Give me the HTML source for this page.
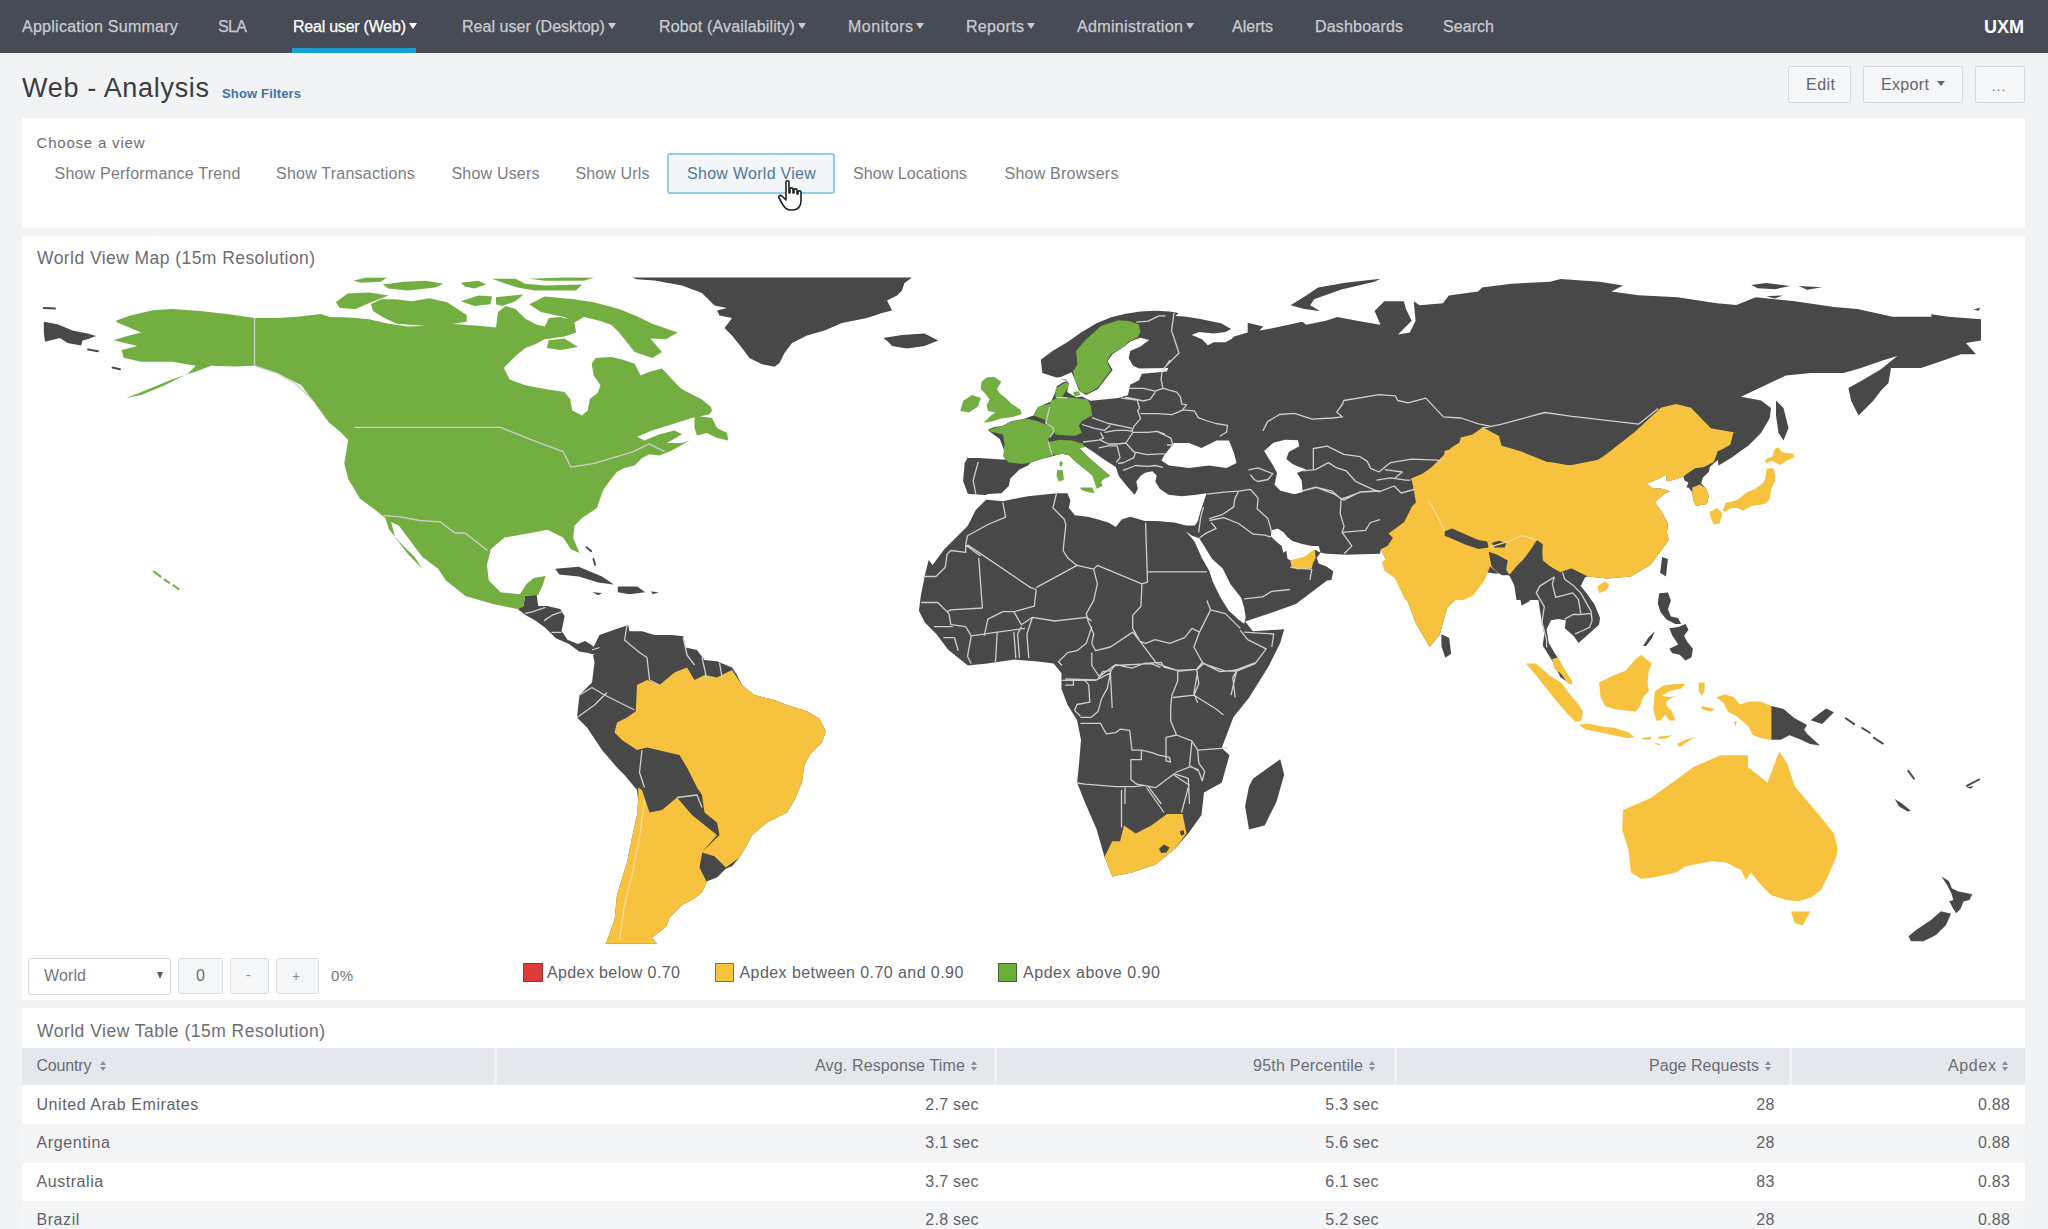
<!DOCTYPE html><html><head><meta charset="utf-8"><style>
html,body{margin:0;padding:0;}
body{width:2048px;height:1229px;overflow:hidden;position:relative;background:#f2f3f5;font-family:"Liberation Sans", sans-serif;}
.t{position:absolute;line-height:1;white-space:nowrap;}
</style></head><body>
<div style="position:absolute;left:0px;top:0px;width:2048px;height:53px;background:#474b56;"></div>
<div style="position:absolute;left:292px;top:48px;width:124px;height:5px;background:#1aa0d0;"></div>
<div class="t" style="left:22.0px;top:19.0px;font-size:16px;color:#c9ccd2;font-weight:400;letter-spacing:0.26px;-webkit-text-stroke:0.25px #c9ccd2;">Application Summary</div>
<div class="t" style="left:218.0px;top:19.0px;font-size:16px;color:#c9ccd2;font-weight:400;letter-spacing:-0.62px;-webkit-text-stroke:0.25px #c9ccd2;">SLA</div>
<div class="t" style="left:293.0px;top:19.0px;font-size:16px;color:#ffffff;font-weight:400;letter-spacing:-0.23px;-webkit-text-stroke:0.25px #ffffff;">Real user (Web)</div>
<div style="position:absolute;left:409px;top:23px;width:0;height:0;border-left:4.0px solid transparent;border-right:4.0px solid transparent;border-top:6px solid #ffffff;"></div>
<div class="t" style="left:462.0px;top:19.0px;font-size:16px;color:#c9ccd2;font-weight:400;letter-spacing:0.03px;-webkit-text-stroke:0.25px #c9ccd2;">Real user (Desktop)</div>
<div style="position:absolute;left:608px;top:23px;width:0;height:0;border-left:4.0px solid transparent;border-right:4.0px solid transparent;border-top:6px solid #c9ccd2;"></div>
<div class="t" style="left:659.0px;top:19.0px;font-size:16px;color:#c9ccd2;font-weight:400;letter-spacing:0.15px;-webkit-text-stroke:0.25px #c9ccd2;">Robot (Availability)</div>
<div style="position:absolute;left:798px;top:23px;width:0;height:0;border-left:4.0px solid transparent;border-right:4.0px solid transparent;border-top:6px solid #c9ccd2;"></div>
<div class="t" style="left:848.0px;top:19.0px;font-size:16px;color:#c9ccd2;font-weight:400;letter-spacing:0.52px;-webkit-text-stroke:0.25px #c9ccd2;">Monitors</div>
<div style="position:absolute;left:916px;top:23px;width:0;height:0;border-left:4.0px solid transparent;border-right:4.0px solid transparent;border-top:6px solid #c9ccd2;"></div>
<div class="t" style="left:966.0px;top:19.0px;font-size:16px;color:#c9ccd2;font-weight:400;letter-spacing:0.32px;-webkit-text-stroke:0.25px #c9ccd2;">Reports</div>
<div style="position:absolute;left:1027px;top:23px;width:0;height:0;border-left:4.0px solid transparent;border-right:4.0px solid transparent;border-top:6px solid #c9ccd2;"></div>
<div class="t" style="left:1077.0px;top:19.0px;font-size:16px;color:#c9ccd2;font-weight:400;letter-spacing:0.35px;-webkit-text-stroke:0.25px #c9ccd2;">Administration</div>
<div style="position:absolute;left:1186px;top:23px;width:0;height:0;border-left:4.0px solid transparent;border-right:4.0px solid transparent;border-top:6px solid #c9ccd2;"></div>
<div class="t" style="left:1232.0px;top:19.0px;font-size:16px;color:#c9ccd2;font-weight:400;letter-spacing:0.02px;-webkit-text-stroke:0.25px #c9ccd2;">Alerts</div>
<div class="t" style="left:1315.0px;top:19.0px;font-size:16px;color:#c9ccd2;font-weight:400;letter-spacing:0.19px;-webkit-text-stroke:0.25px #c9ccd2;">Dashboards</div>
<div class="t" style="left:1443.0px;top:19.0px;font-size:16px;color:#c9ccd2;font-weight:400;letter-spacing:0.06px;-webkit-text-stroke:0.25px #c9ccd2;">Search</div>
<div class="t" style="left:1984.0px;top:18.3px;font-size:18px;color:#ffffff;font-weight:700;letter-spacing:0.00px;">UXM</div>
<div class="t" style="left:22.0px;top:75.1px;font-size:27px;color:#3a3d42;font-weight:400;letter-spacing:0.69px;">Web - Analysis</div>
<div class="t" style="left:222.0px;top:87.0px;font-size:13px;color:#3d72a8;font-weight:700;letter-spacing:0.16px;">Show Filters</div>
<div style="position:absolute;left:1788px;top:66px;width:63px;height:37px;box-sizing:border-box;border:1px solid #d5d8dc;border-radius:2px;background:#f5f6f7;"></div>
<div style="position:absolute;left:1863px;top:66px;width:100px;height:37px;box-sizing:border-box;border:1px solid #d5d8dc;border-radius:2px;background:#f5f6f7;"></div>
<div style="position:absolute;left:1975px;top:66px;width:50px;height:37px;box-sizing:border-box;border:1px solid #d5d8dc;border-radius:2px;background:#f5f6f7;"></div>
<div class="t" style="left:1806.0px;top:77.0px;font-size:16px;color:#62666c;font-weight:400;letter-spacing:0.47px;">Edit</div>
<div class="t" style="left:1881.0px;top:77.0px;font-size:16px;color:#62666c;font-weight:400;letter-spacing:0.35px;">Export</div>
<div style="position:absolute;left:1937px;top:81px;width:0;height:0;border-left:4.0px solid transparent;border-right:4.0px solid transparent;border-top:5px solid #62666c;"></div>
<div class="t" style="left:1992.0px;top:80.0px;font-size:13px;color:#62666c;font-weight:400;letter-spacing:1.09px;">...</div>
<div style="position:absolute;left:22px;top:118px;width:2003px;height:110px;background:#fff;"></div>
<div class="t" style="left:36.5px;top:135.3px;font-size:15px;color:#6b6e73;font-weight:400;letter-spacing:0.80px;">Choose a view</div>
<div style="position:absolute;left:667px;top:153px;width:168px;height:41px;box-sizing:border-box;border:2px solid #93cbe8;border-radius:3px;background:#f3f6f9;"></div>
<div class="t" style="left:54.5px;top:165.5px;font-size:16px;color:#7a7d82;font-weight:400;letter-spacing:0.21px;">Show Performance Trend</div>
<div class="t" style="left:276.0px;top:165.5px;font-size:16px;color:#7a7d82;font-weight:400;letter-spacing:0.23px;">Show Transactions</div>
<div class="t" style="left:451.5px;top:165.5px;font-size:16px;color:#7a7d82;font-weight:400;letter-spacing:0.19px;">Show Users</div>
<div class="t" style="left:575.5px;top:165.5px;font-size:16px;color:#7a7d82;font-weight:400;letter-spacing:0.13px;">Show Urls</div>
<div class="t" style="left:687.0px;top:165.5px;font-size:16px;color:#52789a;font-weight:400;letter-spacing:0.29px;">Show World View</div>
<div class="t" style="left:853.0px;top:165.5px;font-size:16px;color:#7a7d82;font-weight:400;letter-spacing:0.07px;">Show Locations</div>
<div class="t" style="left:1004.5px;top:165.5px;font-size:16px;color:#7a7d82;font-weight:400;letter-spacing:0.23px;">Show Browsers</div>
<svg style="position:absolute;left:778px;top:180px" width="26" height="32" viewBox="0 0 26 32"><path d="M8,2 C8,0.5 11,0.5 11,2 L11,13 L12,13 L12,9 C12,7.5 15,7.5 15,9 L15,13 L16,13 L16,10 C16,8.5 19,8.5 19,10 L19,14 L20,14 L20,12 C20,10.5 23,10.5 23,12 L23,21 C23,26 20,30 15,30 L12,30 C9,30 7,28 5,25 L1,18 C0,16 2,14.5 4,16 L8,20 Z" fill="#fff" stroke="#222" stroke-width="1.6" stroke-linejoin="round"/></svg>
<div style="position:absolute;left:22px;top:236px;width:2003px;height:764px;background:#fff;"></div>
<div class="t" style="left:37.0px;top:250.2px;font-size:17.5px;color:#6b6e73;font-weight:400;letter-spacing:0.44px;">World View Map (15m Resolution)</div>
<svg style="position:absolute;left:0;top:0" width="2048" height="1229" viewBox="0 0 2048 1229"><defs><clipPath id="mc"><rect x="24" y="277" width="2000" height="667"/></clipPath></defs><g clip-path="url(#mc)">
<path fill="#484848" d="M987.3,495.3L967.8,493.8L963.1,480.9L964.6,463.3L967.8,457.5L964.6,457.9L979.3,457.9L1001.3,459.4L1005.7,459.4L1004.2,450.6L999.8,438.9L989.6,431.6L988.1,429.4L993.9,427.2L1002.7,425.7L1011.5,421.3L1023.2,419.1L1029.1,416.9L1033.5,415.5L1036.4,409.6L1043.8,404.5L1051.1,401.6L1055.5,392.0L1056.9,386.2L1062.8,382.5L1067.2,381.0L1042.3,373.0L1040.8,359.8L1052.5,351.0L1067.2,342.2L1081.8,332.0L1096.5,323.2L1111.1,317.3L1125.8,313.7L1140.4,311.5L1155.1,310.7L1169.7,311.5L1178.5,312.9L1175.6,315.9L1184.4,316.6L1199.0,318.8L1221.0,323.2L1231.2,329.0L1225.4,332.0L1213.7,333.4L1199.0,332.0L1191.7,334.9L1202.0,339.3L1207.8,345.2L1213.7,342.2L1225.4,342.2L1231.2,339.3L1234.0,336.4L1247.7,332.5L1247.7,322.7L1263.3,326.6L1259.4,330.5L1271.1,328.6L1302.3,321.8L1306.2,324.7L1325.8,320.8L1337.5,316.9L1357.0,320.8L1380.5,324.7L1374.6,311.0L1384.4,301.2L1403.9,301.2L1405.9,309.1L1411.7,320.8L1398.0,334.5L1409.8,332.5L1415.6,320.8L1413.7,301.2L1419.5,305.2L1443.0,303.2L1448.8,295.4L1478.1,291.5L1482.0,287.6L1511.3,283.7L1550.0,281.7L1560.5,278.9L1599.6,281.7L1623.0,285.6L1611.3,291.4L1638.6,295.3L1677.7,297.3L1716.8,303.2L1736.3,305.1L1755.8,297.3L1794.9,301.2L1833.9,307.1L1857.4,309.0L1892.5,316.8L1931.6,316.8L1931.0,314.2L1948.5,316.8L1981.0,319.2L1981.0,340.5L1966.0,343.0L1976.0,354.2L1961.0,354.2L1936.0,363.0L1921.0,368.0L1891.0,368.0L1888.5,383.0L1881.0,390.5L1873.5,400.5L1858.5,415.5L1851.0,400.5L1848.5,388.0L1861.0,381.0L1881.0,369.2L1897.2,356.0L1881.0,361.0L1861.0,368.0L1843.5,373.0L1811.0,373.0L1786.0,375.5L1741.0,396.8L1761.0,400.5L1771.0,408.0L1769.8,418.0L1761.0,433.0L1748.5,445.5L1731.0,458.0L1718.5,465.5L1717.7,460.0L1709.8,466.9L1708.9,471.8L1703.0,477.6L1701.1,483.5L1705.9,488.4L1708.9,496.2L1706.9,504.0L1696.2,505.9L1693.2,500.1L1692.3,492.3L1688.4,487.4L1686.4,487.4L1688.4,482.5L1683.5,476.6L1674.7,479.6L1666.9,481.5L1665.9,474.7L1659.1,478.6L1649.3,482.5L1646.4,483.5L1652.2,488.4L1661.0,488.4L1669.8,491.3L1663.9,494.2L1657.1,500.1L1654.2,504.0L1659.1,507.9L1663.9,515.7L1667.9,523.5L1666.9,532.3L1668.8,540.0L1662.1,549.2L1650.3,564.9L1630.8,576.6L1607.4,578.5L1587.8,576.6L1585.3,576.9L1580.7,586.1L1586.4,592.9L1594.4,604.3L1600.1,617.9L1599.0,624.8L1588.7,633.9L1578.5,643.0L1573.9,636.2L1564.8,628.2L1565.9,620.2L1557.9,619.1L1551.1,620.2L1546.6,629.3L1548.8,643.0L1553.4,651.0L1559.1,660.0L1560.5,665.5L1568.3,681.1L1572.2,685.0L1560.5,677.2L1552.7,661.6L1542.7,645.6L1544.3,633.9L1542.0,622.5L1539.7,608.8L1537.4,592.9L1528.3,602.0L1521.5,605.4L1520.4,599.7L1514.7,586.1L1510.1,576.9L1507.8,573.5L1503.3,573.5L1494.2,573.5L1488.5,572.4L1486.3,572.7L1466.8,588.3L1447.2,607.8L1439.4,635.2L1429.6,646.9L1416.0,623.5L1404.2,592.2L1396.4,576.6L1388.6,564.9L1380.8,549.2L1380.0,553.8L1346.0,554.7L1326.5,553.8L1320.6,552.8L1316.7,557.7L1318.7,563.5L1326.5,566.4L1333.3,571.3L1331.4,580.0L1327.1,580.5L1311.5,592.2L1295.9,603.9L1268.5,613.7L1245.1,621.5L1252.9,631.3L1284.2,629.3L1280.2,643.0L1268.5,666.4L1249.0,697.7L1233.4,717.2L1221.7,748.1L1229.5,755.3L1221.7,782.7L1204.0,792.5L1201.5,815.0L1189.0,832.5L1174.8,849.1L1155.2,864.7L1131.8,872.5L1112.3,876.4L1104.5,856.9L1096.7,829.5L1084.9,802.2L1077.1,782.7L1079.1,763.1L1081.0,739.7L1077.1,720.2L1067.4,704.5L1061.5,688.9L1061.5,673.3L1053.7,663.5L1038.1,661.6L1014.6,659.6L987.3,663.5L967.8,665.5L948.2,649.8L936.5,634.2L924.8,622.5L918.9,610.8L920.9,595.2L924.8,575.6L928.7,560.0L932.6,564.9L944.3,549.2L967.8,525.8L975.6,510.2L987.3,498.5ZM1139.2,500.6L1150.9,502.0L1148.0,503.5L1140.0,502.0ZM1187.6,502.8L1196.3,500.6L1194.9,504.2L1189.0,505.0ZM632.0,277.5L912.0,277.5L904.5,283.0L902.0,290.5L897.0,295.5L887.0,300.5L892.0,310.5L882.0,313.0L867.0,318.0L842.0,323.0L824.5,330.5L807.0,335.5L792.0,343.0L784.5,353.0L779.5,363.0L774.5,366.8L762.0,364.2L749.5,358.0L742.0,348.0L732.0,335.5L724.5,328.0L732.0,318.0L719.5,315.5L717.0,310.5L727.0,308.0L714.5,305.5L702.0,293.0L682.0,285.5L654.5,280.5L637.0,279.2ZM883.2,338.0L902.0,335.0L924.5,333.5L938.2,340.5L924.5,346.0L907.0,348.5L892.0,346.0L888.2,341.8ZM1290.6,305.2L1306.2,295.4L1318.0,287.6L1345.3,282.7L1380.5,278.8L1374.6,281.7L1341.4,289.5L1314.1,299.3L1310.2,305.2L1319.9,311.0L1304.3,309.1ZM1751.2,285.0L1766.2,282.9L1789.9,286.1L1774.8,289.3L1757.7,288.3ZM1798.5,286.1L1822.1,287.2L1807.1,289.8ZM1766.2,296.2L1783.4,295.4L1774.8,298.4ZM1973.6,309.7L1980.0,307.6L1978.9,310.8ZM1776.0,400.5L1783.5,408.0L1788.5,428.0L1783.5,440.5L1778.5,433.0L1776.0,415.5ZM1683.5,476.6L1688.4,472.7L1695.2,468.3L1704.0,466.9L1712.8,462.5L1717.7,460.0L1709.8,466.9L1708.9,471.8L1703.0,477.6L1698.1,482.5L1701.1,484.5L1694.2,487.4L1686.4,487.4L1688.4,482.5L1684.5,480.5ZM1662.1,557.1L1667.9,559.0L1666.0,576.6L1660.1,572.7ZM1659.2,593.2L1667.9,592.5L1670.9,600.5L1667.9,609.3L1670.9,616.6L1678.2,618.1L1681.1,623.9L1675.3,623.9L1666.5,619.6L1660.6,612.2L1657.7,603.4ZM1669.4,628.3L1678.2,626.9L1685.5,623.9L1688.5,629.8L1684.1,635.7L1687.0,641.5L1692.9,648.8L1691.4,657.6L1685.5,660.6L1679.7,654.7L1672.3,653.2L1669.4,648.8L1678.2,644.5L1675.3,640.1L1672.3,635.7ZM1643.0,645.9L1648.9,637.1L1654.8,631.3L1651.8,638.6L1646.0,645.9ZM1441.4,634.2L1449.2,638.1L1451.1,653.8L1445.3,657.7L1441.4,645.9ZM1252.9,778.8L1280.2,759.2L1284.2,774.8L1276.3,802.2L1264.6,825.6L1249.0,829.5L1245.1,806.1L1249.0,786.6ZM1771.2,706.0L1783.7,708.9L1793.9,717.7L1807.1,725.0L1804.2,729.4L1807.1,733.8L1820.0,745.5L1810.0,744.1L1801.2,739.7L1789.5,735.3L1780.7,739.7L1771.2,739.7ZM1810.5,720.2L1826.1,708.4L1833.9,712.3L1822.2,724.1ZM1894.7,799.0L1902.0,803.4L1910.8,810.7L1907.8,811.5L1899.1,806.4ZM1966.4,787.3L1973.7,785.9L1970.8,788.8ZM1941.5,876.6L1948.8,881.0L1951.8,888.3L1957.6,891.3L1972.3,894.2L1969.3,900.1L1963.5,901.5L1960.6,908.8L1956.2,913.2L1953.2,908.8L1950.3,903.0L1948.8,901.5L1953.2,900.1L1951.8,894.2L1947.4,885.4ZM1908.5,936.2L1916.0,930.0L1931.0,920.0L1941.0,911.2L1951.0,913.8L1946.0,925.0L1936.0,935.0L1923.5,941.2L1911.0,941.2ZM43.8,321.8L57.5,324.2L72.5,330.5L87.5,333.5L96.2,336.0L87.5,339.2L82.5,340.5L81.2,345.5L67.5,343.0L60.0,338.0L45.0,341.8L43.8,333.0ZM517.7,608.9L523.6,606.0L525.0,595.7L536.7,595.0L538.2,606.0L547.0,606.0L560.2,608.9L564.6,616.2L561.6,630.9L567.5,639.7L577.8,644.1L585.1,641.1L592.4,645.5L596.8,651.4L602.7,648.5L598.3,655.8L588.0,652.9L579.2,651.4L569.0,644.1L555.8,638.2L545.5,627.9L535.3,620.6L525.0,614.8ZM555.2,568.8L578.7,566.8L602.1,576.6L613.8,584.4L598.2,582.5L578.7,576.6L559.2,574.6ZM617.8,586.4L637.3,586.4L645.1,592.2L629.5,594.2L617.8,592.2ZM592.4,592.2L602.1,593.0L598.2,595.3ZM651.0,591.4L658.8,592.2L652.9,594.2ZM592.0,650.0L599.5,635.0L617.0,628.8L628.2,625.0L629.5,631.2L642.0,631.2L654.5,635.0L672.0,635.0L683.2,636.2L685.8,647.5L697.0,650.0L704.5,660.0L717.0,661.2L732.0,667.5L737.0,675.0L742.0,685.0L754.5,695.0L774.5,700.0L787.0,705.0L807.0,711.2L819.5,718.8L825.8,731.2L822.0,742.5L809.5,755.0L804.5,765.0L802.0,782.5L794.5,800.0L787.0,812.5L767.0,822.5L752.0,835.0L747.0,845.0L739.5,857.5L732.0,866.2L725.8,868.8L717.0,877.5L707.0,881.2L702.0,892.5L692.0,900.0L682.0,905.0L677.0,910.0L669.5,917.5L667.0,925.0L662.0,930.0L652.0,937.5L657.0,943.8L605.8,943.8L614.5,920.0L617.0,895.0L627.0,862.5L632.0,837.5L637.0,815.0L638.2,800.0L638.2,800.0L637.0,790.0L624.5,775.0L617.0,767.5L602.0,750.0L587.0,727.5L577.0,717.5L579.5,695.0L592.0,682.5L594.5,662.5Z"/>
<path fill="#ffffff" d="M982.5,496.2L988.3,494.0L1001.5,493.2L1008.8,485.9L1010.3,478.6L1019.1,469.8L1027.9,465.4L1030.8,462.5L1042.5,458.8L1051.3,456.6L1061.6,453.7L1068.9,455.2L1074.8,461.0L1083.6,468.3L1092.3,474.2L1098.2,477.1L1101.1,481.5L1099.7,485.9L1095.3,488.8L1098.2,484.5L1104.1,478.6L1109.9,475.7L1101.1,468.3L1090.9,459.6L1083.6,452.2L1079.2,447.8L1085.0,446.4L1093.8,452.2L1104.1,459.6L1115.8,466.9L1118.7,475.7L1123.1,481.5L1130.4,490.3L1134.8,494.7L1137.8,488.8L1136.3,481.5L1140.7,475.7L1145.1,472.7L1152.4,471.3L1156.8,475.7L1155.3,481.5L1159.7,488.8L1168.5,494.7L1181.7,496.2L1196.3,494.7L1206.6,493.2L1203.7,502.0L1200.7,510.8L1197.8,521.1L1194.9,525.5L1186.1,525.5L1174.4,522.5L1156.8,521.1L1145.1,521.1L1130.4,516.7L1121.6,519.6L1115.8,526.9L1108.5,522.5L1098.2,519.6L1087.9,516.7L1074.8,515.2L1068.9,507.9L1070.4,500.6L1067.4,493.2L1057.2,493.2L1042.5,494.7L1027.9,496.2L1013.2,499.1L1003.0,501.3L986.9,499.8L982.5,497.6ZM1164.0,455.5L1174.0,443.0L1189.0,443.0L1201.5,448.0L1216.5,440.5L1229.0,440.5L1234.0,453.0L1236.5,463.0L1226.5,468.0L1209.0,465.5L1189.0,468.0L1169.0,465.5L1161.5,460.5ZM1264.1,450.9L1273.4,442.7L1285.2,439.7L1298.0,440.3L1299.2,446.2L1288.7,452.0L1286.3,459.1L1292.2,463.8L1296.9,466.1L1306.2,469.6L1296.9,473.1L1301.6,480.2L1302.7,491.9L1294.5,494.2L1280.5,490.7L1274.6,484.8L1277.0,473.1L1273.4,466.1ZM1185.6,531.0L1194.4,541.2L1202.2,558.8L1209.1,570.5L1213.0,582.3L1220.8,597.9L1228.6,610.6L1238.4,619.4L1244.2,623.8L1245.7,617.4L1244.2,607.7L1241.3,597.9L1230.5,584.2L1222.7,568.6L1212.0,558.8L1199.3,538.3L1191.5,535.4ZM1270.8,536.2L1271.8,530.3L1277.7,528.4L1283.5,532.3L1287.4,537.1L1292.3,541.1L1302.1,544.0L1311.8,545.9L1318.7,545.9L1320.6,552.8L1314.8,549.8L1309.9,553.8L1302.1,558.6L1290.4,560.6L1287.4,558.6L1286.4,550.8L1283.5,552.8L1281.6,545.9L1275.7,541.1ZM1051.1,378.8L1061.3,376.7L1071.6,372.3L1074.5,378.8L1078.9,390.6L1086.2,395.0L1097.9,389.1L1106.7,377.4L1112.6,370.1L1107.5,361.3L1112.6,353.9L1124.3,346.6L1130.2,341.5L1140.4,337.8L1149.2,340.0L1140.4,346.6L1130.2,351.0L1128.7,358.3L1133.1,365.7L1139.0,368.6L1168.3,367.9L1166.8,371.5L1141.9,373.7L1139.0,380.3L1130.2,384.7L1128.0,395.0L1118.5,397.9L1090.6,400.8L1081.8,396.4L1076.0,397.2L1067.2,392.0L1068.7,383.2L1065.7,379.6Z"/>
<path fill="#72ae40" d="M115.8,320.7L129.5,315.7L152.9,310.2L172.4,309.0L199.8,311.0L227.1,314.1L254.5,318.0L277.9,318.0L297.4,316.8L320.9,314.1L330.0,316.9L349.5,317.5L369.1,319.2L388.6,323.7L408.1,326.6L427.7,325.7L439.4,322.3L457.0,324.3L478.4,325.7L496.0,327.6L498.0,312.0L505.8,306.1L515.5,309.1L525.3,318.8L537.0,324.7L544.8,326.6L548.8,317.9L560.5,316.9L574.1,320.8L576.1,332.5L564.4,336.4L544.8,339.3L535.1,344.2L525.3,348.1L515.5,355.9L503.8,367.7L509.7,379.4L525.3,385.2L544.8,389.1L564.4,392.1L570.2,398.9L572.2,410.6L582.0,415.5L587.8,410.6L589.8,398.9L597.6,393.0L600.5,385.2L593.7,375.5L591.7,363.8L595.6,357.9L611.2,356.9L623.0,359.8L634.7,363.8L640.5,375.5L650.3,371.6L662.0,368.6L677.7,385.2L681.6,389.1L701.1,398.9L710.9,406.7L712.0,410.5L709.5,414.2L692.0,418.0L672.0,424.2L652.0,430.5L637.0,436.8L644.5,440.5L659.5,434.2L674.5,430.5L682.0,434.2L667.0,443.0L682.0,443.0L689.5,440.5L672.0,450.5L659.5,455.5L649.5,454.2L642.0,458.0L634.5,465.5L624.5,468.0L617.0,471.8L612.0,478.0L604.5,488.0L602.0,493.0L597.0,508.0L582.0,518.0L574.5,525.5L573.2,538.0L579.5,553.0L570.9,549.2L563.1,537.5L547.4,529.7L527.9,533.6L504.5,537.5L490.8,549.2L486.9,564.9L488.8,580.5L500.6,592.2L519.9,594.3L526.5,584.0L533.8,578.1L545.5,575.9L542.6,585.5L538.2,595.0L525.0,595.7L523.6,606.0L517.0,608.9L492.8,603.9L465.4,596.1L445.9,580.5L438.1,568.8L422.4,557.1L410.7,541.4L399.0,525.8L391.2,521.9L395.1,537.5L408.8,555.1L422.4,568.8L414.6,557.1L399.0,541.4L389.2,529.7L385.3,518.0L375.6,510.2L359.9,498.5L348.2,478.9L344.3,463.3L348.2,439.9L340.4,432.1L328.7,422.3L313.1,400.8L301.3,385.2L277.9,373.5L254.5,365.7L234.9,366.4L211.5,365.7L195.9,371.5L172.4,379.3L149.0,389.1L126.3,398.1L141.2,395.0L164.6,385.2L188.1,373.5L195.9,365.7L172.4,361.8L141.2,361.8L123.6,357.8L121.7,350.0L137.3,346.1L113.8,340.3L125.6,336.4L141.2,332.5L117.8,322.7ZM335.9,302.2L347.6,293.4L369.1,292.5L388.6,295.4L371.0,302.2L355.4,309.1L339.8,308.1ZM371.0,304.2L380.8,299.3L394.5,299.3L412.0,301.2L429.6,298.3L447.2,302.2L466.7,314.9L466.7,321.8L447.2,324.7L423.8,325.7L396.4,323.7L382.7,316.9L373.0,311.0ZM353.4,280.7L365.2,277.8L386.6,277.8L380.8,281.7L361.2,282.7ZM382.7,284.6L404.2,281.7L425.7,280.7L443.3,283.7L435.5,287.6L408.1,290.5L388.6,288.6ZM460.9,282.7L478.4,280.7L486.2,284.6L474.5,288.6L464.8,286.6ZM492.1,278.8L515.5,278.8L525.3,283.7L544.8,285.6L582.0,284.6L576.1,290.5L535.1,290.5L517.5,287.6L505.8,283.7ZM529.2,278.8L564.4,277.4L593.7,277.8L583.9,280.7L544.8,280.7ZM460.9,301.2L478.4,295.4L492.1,296.4L490.2,304.2L474.5,306.1ZM496.0,297.3L523.4,294.4L515.5,301.2L501.9,306.1L496.0,304.2ZM529.2,304.2L544.8,296.4L574.1,299.3L593.7,302.2L619.1,309.1L638.6,316.9L652.3,323.7L677.7,332.5L665.9,339.3L650.3,338.4L662.0,352.0L652.3,357.9L634.7,352.0L626.9,342.3L619.1,332.5L611.2,324.7L599.5,320.8L583.9,316.9L574.1,322.7L564.4,316.9L554.6,314.9L540.9,312.0ZM548.8,340.3L564.4,338.4L578.0,347.1L560.5,350.1L546.8,348.1ZM694.5,415.5L712.0,418.0L717.0,428.0L727.0,433.0L728.2,440.5L717.0,438.0L707.0,433.0L697.0,435.5L694.5,428.0ZM981.5,381.8L986.6,377.4L993.9,376.7L1001.3,381.8L996.9,389.1L999.8,393.5L1005.7,397.9L1011.5,403.8L1020.3,409.6L1021.8,414.0L1013.0,416.9L1001.3,418.4L992.5,421.3L983.7,422.8L991.0,415.5L995.4,412.5L988.1,411.1L986.6,405.2L989.6,399.4L985.2,393.5L980.8,389.1ZM960.3,411.1L963.2,400.8L972.0,395.0L980.8,397.9L977.8,406.7L969.0,412.5ZM988.1,430.1L1002.7,425.7L1013.0,421.3L1026.2,418.4L1037.9,421.3L1052.5,427.2L1054.0,431.6L1048.1,438.9L1051.1,446.2L1048.4,442.0L1049.9,449.3L1052.8,455.2L1042.5,458.8L1030.8,462.5L1022.0,463.9L1008.8,462.5L1003.0,456.6L1004.5,444.9L1003.0,434.6L988.3,431.0ZM1033.5,415.5L1037.9,406.7L1049.6,403.8L1051.1,412.5L1045.2,419.9ZM1051.1,400.8L1061.3,396.4L1074.5,397.9L1087.7,399.4L1090.6,405.2L1092.1,415.5L1081.8,421.3L1078.9,425.7L1081.8,433.0L1074.5,436.0L1055.5,434.5L1052.5,427.2L1045.2,422.8L1046.7,412.5ZM1055.5,389.1L1061.3,384.7L1067.2,381.8L1068.7,386.2L1064.3,393.5L1061.3,397.9L1055.5,397.9ZM1073.0,392.0L1078.9,391.3L1080.4,395.0L1074.5,396.4ZM1076.0,351.0L1084.8,340.8L1100.9,326.1L1118.5,320.3L1128.7,321.0L1139.0,324.6L1140.4,332.0L1137.5,337.8L1128.7,341.5L1124.3,346.6L1111.1,353.9L1106.7,361.3L1111.1,370.1L1105.3,377.4L1097.9,387.6L1087.7,393.5L1080.4,392.0L1074.5,378.8L1073.0,371.5L1077.4,364.2ZM1049.1,442.0L1060.1,439.8L1071.8,440.5L1082.1,443.4L1085.0,447.1L1079.2,448.6L1083.6,452.2L1090.9,459.6L1101.1,468.3L1109.9,475.7L1108.5,477.1L1104.1,478.6L1101.1,481.5L1102.6,485.9L1096.7,488.8L1095.3,484.5L1092.3,475.7L1083.6,468.3L1074.8,461.0L1068.9,455.2L1061.6,453.7L1055.7,455.2L1051.3,451.5L1049.9,446.4ZM1057.2,469.8L1063.0,470.5L1063.8,480.1L1058.7,481.5L1056.5,475.7ZM1060.1,461.0L1063.0,462.5L1061.6,466.9L1059.4,465.4ZM1080.6,487.4L1092.3,487.4L1094.5,493.2L1086.5,491.8L1080.6,489.6Z"/>
<path fill="#f7c33e" d="M1411.0,478.6L1421.3,474.2L1433.0,469.8L1443.2,462.5L1444.7,450.8L1457.9,447.8L1460.8,437.6L1472.5,434.6L1482.8,427.3L1498.9,436.1L1501.8,446.4L1516.5,450.8L1528.2,459.6L1553.1,462.5L1578.0,466.9L1598.5,459.6L1611.7,450.8L1627.8,444.9L1651.2,439.0L1670.0,434.6L1670.0,471.3L1645.4,483.0L1657.1,490.3L1655.6,502.0L1663.0,513.8L1664.4,531.3L1657.1,544.5L1645.4,560.6L1627.8,572.3L1610.2,576.7L1598.5,573.8L1589.7,575.3L1580.9,569.4L1572.1,567.9L1560.4,572.3L1550.2,566.5L1542.9,560.6L1541.4,541.6L1537.0,540.1L1531.1,548.9L1523.8,559.2L1516.5,566.5L1510.6,573.8L1498.9,573.8L1490.1,566.5L1484.3,581.1L1472.5,595.8L1463.8,600.0L1405.2,600.0L1394.9,578.2L1384.6,570.9L1381.7,562.1L1392.0,556.2L1387.6,546.0L1396.4,532.8L1409.6,518.1L1412.5,507.9L1428.6,500.6L1413.9,487.4ZM1412.1,480.9L1431.6,467.2L1451.1,447.7L1482.4,428.2L1501.9,445.7L1521.4,451.6L1560.5,467.2L1599.6,459.4L1634.7,432.1L1660.9,407.8L1676.1,403.9L1691.0,407.8L1710.9,428.2L1735.9,432.8L1733.3,432.7L1730.4,444.4L1722.5,449.3L1717.7,451.2L1713.8,462.0L1704.0,466.9L1695.2,468.3L1688.4,472.7L1683.5,476.6L1674.7,479.6L1666.9,481.5L1665.9,474.7L1659.1,478.6L1649.3,482.5L1646.4,483.5L1652.2,488.4L1661.0,488.4L1669.8,491.3L1663.9,494.2L1657.1,500.1L1654.2,504.0L1659.1,507.9L1663.9,515.7L1667.9,523.5L1666.9,532.3L1668.8,540.0L1662.1,549.2L1650.3,564.9L1630.8,576.6L1607.4,578.5L1587.8,576.6L1572.2,568.8L1552.7,561.0L1537.1,541.4L1521.4,537.5L1490.2,537.5L1451.1,525.8L1431.6,510.2L1416.0,502.4ZM1597.6,585.9L1605.0,581.5L1609.4,584.4L1606.4,590.3L1599.1,593.2ZM1419.9,498.5L1435.5,502.4L1443.3,518.0L1451.1,529.7L1490.2,545.3L1501.9,541.4L1521.4,537.5L1537.1,533.6L1533.2,549.2L1517.5,564.9L1505.8,568.8L1498.0,557.1L1490.2,564.9L1486.3,572.7L1466.8,588.3L1447.2,607.8L1439.4,635.2L1429.6,646.9L1416.0,623.5L1404.2,592.2L1396.4,576.6L1388.6,564.9L1380.8,549.2L1396.4,541.4L1388.6,533.6L1404.2,521.9L1412.1,506.3ZM1290.4,560.6L1297.2,558.6L1305.0,556.7L1310.9,551.8L1314.8,549.8L1315.7,557.7L1312.8,563.5L1311.8,568.4L1297.2,569.4L1291.3,566.4ZM1692.3,487.4L1700.1,484.5L1705.9,488.4L1708.9,496.2L1706.9,504.0L1696.2,505.9L1693.2,500.1L1692.3,492.3ZM1774.3,449.3L1778.2,447.3L1782.1,452.2L1792.9,453.7L1794.8,457.1L1786.0,461.0L1780.2,464.9L1772.3,461.0L1766.5,463.0L1764.5,461.0L1767.5,458.1L1772.3,457.1ZM1766.5,468.8L1773.3,467.9L1775.3,474.7L1775.3,480.5L1771.4,488.4L1769.4,500.1L1764.5,504.0L1751.8,505.9L1743.0,510.8L1737.2,507.9L1731.3,507.9L1725.5,511.8L1722.5,510.8L1725.5,503.0L1737.2,500.1L1747.0,492.3L1754.8,489.3L1762.6,483.5L1765.5,478.6ZM1709.8,511.8L1717.7,507.9L1722.5,513.8L1719.6,523.5L1713.8,524.5L1710.8,517.7ZM1525.9,663.5L1536.1,663.5L1549.3,675.2L1561.0,682.5L1569.8,694.3L1578.6,704.5L1583.0,711.8L1581.5,720.6L1575.7,722.1L1568.3,714.8L1558.1,703.0L1546.4,688.4L1536.1,675.2ZM1552.2,659.1L1558.1,657.6L1563.9,667.9L1571.3,679.6L1572.7,684.0L1568.3,684.0L1561.0,673.8L1553.7,667.9ZM1578.6,725.0L1587.4,723.6L1602.0,726.5L1615.2,727.9L1628.4,732.3L1634.3,736.7L1628.4,738.2L1613.8,735.3L1599.1,732.3L1585.9,729.4ZM1641.6,738.2L1651.8,736.7L1650.4,739.7L1643.0,739.7ZM1657.7,736.7L1672.3,735.3L1666.5,738.2L1659.2,738.9ZM1653.3,742.6L1660.6,744.1L1659.2,745.5ZM1676.7,744.1L1685.5,739.7L1695.8,736.7L1688.5,741.1L1679.7,747.0ZM1599.1,682.5L1613.8,675.2L1625.5,670.8L1635.7,659.1L1641.6,654.7L1646.0,659.1L1651.8,663.5L1648.9,670.8L1647.4,682.5L1648.9,691.3L1643.0,697.2L1640.1,706.0L1635.7,711.8L1625.5,710.4L1613.8,708.9L1605.0,706.0L1600.6,697.2ZM1654.8,691.3L1663.6,685.5L1675.3,684.0L1685.5,684.0L1681.1,688.4L1669.4,691.3L1662.1,695.7L1669.4,697.2L1675.3,695.7L1666.5,701.6L1666.5,706.0L1672.3,711.8L1675.3,720.6L1669.4,720.6L1665.0,714.8L1660.6,720.6L1656.2,720.6L1653.3,708.9ZM1698.7,682.5L1704.6,682.5L1704.6,691.3L1701.6,695.7L1698.7,691.3ZM1701.6,706.0L1714.8,708.9L1710.4,711.8L1701.6,708.9ZM1733.9,720.6L1736.8,722.1L1735.3,726.5ZM1716.3,697.2L1725.1,694.3L1733.9,697.2L1739.7,704.5L1748.5,701.6L1760.2,701.6L1771.2,706.0L1771.2,739.7L1761.7,738.2L1752.9,735.3L1748.5,726.5L1736.8,716.2L1728.0,711.8L1723.6,703.0ZM1623.0,810.0L1650.3,798.3L1677.7,778.8L1693.3,767.0L1720.7,755.3L1748.0,755.3L1748.0,767.0L1767.5,782.7L1779.2,751.4L1787.1,763.1L1794.9,786.6L1818.3,813.9L1833.9,833.4L1837.8,849.1L1836.0,857.5L1828.5,875.0L1821.0,890.0L1811.0,897.5L1798.5,901.2L1786.0,900.0L1771.0,895.0L1761.0,885.0L1751.0,872.5L1746.0,880.0L1741.0,870.0L1726.0,862.5L1711.0,861.2L1686.0,866.2L1676.0,872.5L1653.5,877.5L1641.0,878.8L1631.0,872.5L1628.5,850.0L1622.2,830.0ZM1791.0,911.6L1810.5,911.6L1802.7,925.2L1794.9,923.3ZM1104.5,856.9L1112.3,876.4L1131.8,872.5L1155.2,864.7L1174.8,849.1L1186.5,833.4L1182.6,813.9L1167.0,813.9L1151.3,825.6L1135.7,833.4L1124.0,825.6L1120.1,841.2L1112.3,841.2ZM732.0,670.0L742.0,685.0L754.5,695.0L774.5,700.0L787.0,705.0L807.0,711.2L819.5,718.8L825.8,731.2L822.0,742.5L809.5,755.0L804.5,765.0L802.0,782.5L794.5,800.0L787.0,812.5L767.0,822.5L752.0,835.0L747.0,845.0L739.5,857.5L725.8,867.5L714.5,856.2L702.0,852.5L712.0,842.5L719.5,835.0L717.0,822.5L704.5,812.5L702.0,795.0L697.0,787.5L687.0,767.5L679.5,755.0L647.0,747.5L637.0,750.0L622.0,740.0L614.5,732.5L617.0,722.5L627.0,717.5L635.8,711.2L637.0,685.0L647.0,680.0L659.5,685.0L674.5,672.5L687.0,667.5L694.5,680.0L704.5,675.0L717.0,677.5ZM638.2,787.5L642.0,790.0L649.5,812.5L662.0,810.0L677.0,797.5L692.0,815.0L717.0,835.0L702.0,852.5L702.0,853.8L699.5,867.5L707.0,882.5L702.0,892.5L692.0,900.0L682.0,905.0L677.0,910.0L669.5,917.5L667.0,925.0L662.0,930.0L652.0,937.5L657.0,943.8L605.8,943.8L614.5,920.0L617.0,895.0L627.0,862.5L632.0,837.5L637.0,815.0L638.2,800.0L638.2,800.0Z"/>
<path fill="#484848" d="M1159.0,848.8L1164.0,844.5L1169.5,847.5L1166.5,852.5L1161.0,853.0ZM1179.8,831.2L1183.5,830.0L1184.5,834.5L1181.0,835.5ZM1444.7,531.3L1452.0,528.4L1465.2,534.3L1478.4,540.1L1487.2,541.6L1488.7,547.4L1478.4,548.9L1465.2,544.5L1452.0,538.7L1444.7,535.7ZM1491.6,543.0L1498.9,540.8L1506.2,543.0L1504.8,547.4L1494.5,547.4ZM1488.7,551.8L1497.4,554.8L1507.7,560.6L1506.2,569.4L1509.2,575.3L1501.8,575.3L1496.0,570.9L1491.6,566.5L1490.1,559.2ZM1537.0,540.1L1542.9,544.5L1541.4,560.6L1550.2,566.5L1559.0,573.8L1553.1,581.1L1542.9,588.5L1538.5,600.0L1516.5,600.0L1513.6,581.1L1510.6,573.8L1516.5,566.5L1523.8,559.2L1531.1,548.9Z"/>
<path fill="none" stroke="#484848" stroke-width="1.9" stroke-linecap="round" d="M1845.7,718.2L1854.2,724.1M1862.1,728.0L1869.9,732.7M1873.8,737.7L1882.8,743.6M1908.2,770.9L1914.0,778.8M1966.8,785.8L1979.2,779.5M88.0,349.5L98.0,351.2M112.5,367.5L120.0,369.2M43.8,308.0L55.0,308.5M586.5,547.3L591.2,551.2M593.5,559.0L595.1,564.9"/>
<path fill="none" stroke="#72ae40" stroke-width="2.0" stroke-linecap="round" d="M153.7,571.5L160.7,576.6M164.6,579.7L169.3,582.8M173.2,585.2L178.7,589.1"/>
<path fill="none" stroke="#cfcfcf" stroke-width="1.3" stroke-linejoin="round" d="M1002.8,502.3L1005.6,517.1L987.9,524.5L967.5,535.7L965.7,544.9M965.7,544.9L965.7,552.4L950.8,550.5L947.1,554.2L945.3,567.2L936.0,576.5L923.0,576.5M965.7,544.9L980.5,556.1M978.7,557.9L982.4,608.0L950.8,609.9L947.1,611.7M921.1,602.5L937.8,602.5L949.0,613.6M967.5,544.9L1030.6,587.6L1036.2,589.5M1036.2,587.6L1077.0,565.4M1056.6,493.0L1052.9,507.8L1064.0,519.0L1065.9,524.5M1065.9,524.5L1063.1,550.5L1067.7,557.9L1077.0,565.4L1093.7,569.1M1093.7,569.1L1097.4,565.4L1141.9,583.9M1145.6,522.7L1147.5,582.1L1141.9,583.9M1147.5,571.8L1206.9,571.8M1141.9,583.9L1141.0,606.2L1132.7,615.4L1132.7,628.4L1140.1,641.4M1093.7,569.1L1097.4,583.9L1093.7,600.6L1086.3,613.6L1088.1,621.0L1093.7,634.0L1091.8,643.3M1036.2,589.5L1034.3,606.2L1013.9,611.7L1002.8,611.7L987.9,619.2L984.2,635.9M1013.9,611.7L1021.3,624.7L1032.5,617.3L1054.7,621.0L1086.3,617.3L1091.8,621.0M1091.8,626.6L1086.3,643.3L1077.0,650.7L1067.7,652.6L1058.4,661.8L1062.1,665.5M1032.5,617.3L1026.9,634.0L1028.8,658.1M1021.3,626.6L1017.6,634.0L1019.5,658.1M1013.9,632.1L1015.8,658.1M997.2,632.1L995.4,663.7M971.2,635.9L997.2,632.1L1025.0,628.4M949.0,613.6L950.8,624.7L965.7,626.6L971.2,635.9L967.5,656.3L971.2,663.7M934.1,626.6L952.7,626.6M943.4,637.7L954.5,637.7L958.2,650.7M1091.8,643.3L1095.5,650.7L1110.4,647.0L1132.7,632.1L1140.1,641.4L1145.6,643.3L1154.9,639.6L1169.8,643.3L1184.6,637.7L1192.0,628.4L1199.5,632.1M1206.9,600.6L1210.6,609.9L1199.5,632.1L1193.9,647.0L1203.2,663.7M1210.6,609.9L1225.4,613.6L1240.3,628.4M1240.3,630.3L1247.7,639.6L1266.2,648.8L1255.1,663.7L1236.6,671.1L1231.0,695.2M1244.0,632.1L1273.7,634.0L1271.8,647.0M1140.1,641.4L1156.8,663.7L1179.0,671.1L1197.6,669.3L1203.2,663.7L1225.4,671.1L1236.6,671.1M1091.8,652.6L1091.8,665.5L1099.3,676.7L1114.1,665.5L1151.2,663.7L1160.5,667.4M1197.6,671.1L1193.9,693.4L1197.6,702.7M1062.1,680.4L1095.5,680.4L1110.4,673.0L1112.2,708.0M1244.0,598.8L1262.5,596.9L1271.8,591.3L1290.0,589.5M1098.0,678.8L1102.7,671.7L1110.9,670.5L1115.6,664.7L1132.0,668.2L1143.8,663.5L1161.3,662.3L1163.7,667.0L1177.7,670.5L1196.5,669.4L1202.3,662.3M1202.3,662.3L1208.2,665.9L1219.9,671.7L1232.8,670.5L1237.5,669.4L1256.2,662.3M1110.9,670.5L1107.4,688.1L1101.6,698.7L1098.0,711.6L1091.0,717.4L1080.5,717.4M1065.2,678.8L1096.9,679.9M1084.0,679.9L1088.7,684.6L1089.8,702.2L1077.0,704.5L1074.6,710.4L1080.5,716.2M1065.2,685.2L1073.4,685.2L1073.4,681.1M1177.7,670.5L1177.7,681.1L1171.9,695.2L1170.7,706.9L1170.7,720.9L1176.6,735.0M1173.0,697.5L1194.1,695.2M1196.5,669.4L1198.8,683.4L1194.1,695.2L1216.4,709.2L1223.4,715.1M1237.5,669.4L1232.8,677.6L1235.2,697.5M1080.5,723.3L1100.4,723.3L1106.2,733.8L1115.6,732.7L1120.3,729.1L1129.7,730.3L1132.0,750.2L1141.4,750.2M1141.4,750.2L1152.0,752.6L1157.8,754.9L1169.5,757.3L1170.7,762.0L1166.0,760.8L1166.0,737.3L1176.6,735.0M1141.4,750.2L1141.4,759.6L1130.9,759.6L1130.9,779.5L1136.7,784.2M1176.6,735.0L1191.8,740.9L1197.7,750.2L1228.1,747.9M1191.8,742.0L1189.5,765.5L1198.8,771.3L1202.3,780.7L1204.7,771.3L1198.8,763.1L1197.7,750.2M1175.4,772.5L1190.6,766.6L1198.8,770.2M1136.7,784.2L1155.5,787.7L1174.2,773.7L1188.3,778.4L1189.5,804.0M1077.0,783.0L1085.2,784.2L1115.6,786.6L1134.4,786.6L1143.8,785.4M1125.0,787.7L1125.0,804.0M1148.4,786.6L1161.3,804.0M1121.5,790.0L1121.5,827.5M1146.5,787.5L1164.0,812.5M1174.0,775.0L1189.0,785.0L1181.5,812.5M1174.0,313.0L1171.5,330.5L1179.0,353.0L1164.0,368.0M1207.3,494.2L1223.9,492.2L1238.6,491.2L1250.3,489.3M1238.6,491.2L1234.7,499.1L1233.7,506.9L1222.0,514.7L1209.3,518.6M1250.3,489.3L1258.1,498.1L1257.1,508.8L1267.9,518.6L1270.8,528.4L1271.8,534.2M1209.3,520.5L1223.9,517.6L1238.6,523.5L1253.2,534.2L1265.0,535.2L1270.8,537.1M1211.2,522.5L1216.1,528.4L1204.4,534.2L1199.5,538.1M1203.4,506.9L1200.5,518.6L1198.6,532.3M1302.1,491.2L1316.7,487.3L1332.3,491.2L1341.1,499.1M1341.1,499.1L1340.2,513.7L1344.1,526.4L1342.1,532.3L1351.9,545.9L1344.1,553.8M1342.1,532.3L1365.5,530.3L1370.4,522.5L1380.0,519.6M1341.1,499.1L1360.7,492.2L1380.0,491.2M1290.4,567.4L1311.8,569.4L1309.9,580.0M1248.4,469.8L1258.1,467.8L1263.0,469.8L1272.8,473.7L1267.9,479.5L1258.1,481.5L1254.2,479.5L1250.3,474.6M1313.3,469.6L1313.3,448.5L1327.3,446.2L1343.8,454.4L1360.2,456.7L1367.2,461.4L1370.7,468.4L1378.9,472.0L1390.6,462.6L1411.7,459.1L1437.5,460.2L1442.2,461.4M1302.7,470.8L1315.6,469.6L1328.5,462.6L1335.5,467.3L1346.1,470.8L1355.5,481.3L1370.7,488.4M1302.7,490.7L1315.6,487.2L1334.4,494.2L1343.8,500.1L1360.2,491.9L1378.9,490.7M1370.7,488.4L1378.9,491.9L1394.1,486.0L1401.2,493.0L1414.1,489.5M1376.6,480.2L1390.6,477.8L1405.9,480.2L1410.5,480.2M1384.8,469.6L1402.3,472.0L1395.3,477.8M1262.9,430.9L1267.6,421.6L1279.3,414.5L1294.5,413.4L1312.1,419.2L1332.0,418.0L1342.6,416.9L1336.7,412.2L1342.6,404.0L1343.8,400.5L1378.9,394.6L1395.3,395.8L1397.7,400.5L1408.2,402.8L1425.8,398.1L1443.4,416.9L1460.9,418.0L1478.5,423.9L1490.0,426.2M1554.5,576.9L1539.7,586.1L1536.3,592.9L1544.3,606.6L1542.0,622.5L1546.6,639.6L1546.6,647.6M1554.5,576.9L1552.3,583.8L1555.7,597.4L1572.8,592.9L1578.5,599.7L1580.7,613.4M1562.5,572.4L1564.8,579.2L1573.9,586.1L1580.7,592.9L1591.0,611.1L1592.1,620.2M1564.8,619.1L1572.8,614.5L1580.7,614.5L1591.0,613.4L1592.1,620.2L1589.8,627.1L1583.0,630.5L1575.0,633.9M978.2,461.8L973.2,480.5L975.8,494.2M1045.2,422.8L1052.5,427.2L1054.0,431.6L1049.6,437.4M1056.2,397.6L1067.2,397.6M1048.4,442.0L1050.2,449.3L1052.8,455.2M1136.3,322.2L1148.2,321.2L1158.9,315.8L1165.4,315.8M1169.9,360.0L1162.1,371.7L1161.1,379.5L1163.0,388.3L1176.7,392.2L1180.6,397.1L1181.6,403.9L1186.5,404.9L1182.6,409.8M1127.9,388.3L1143.5,388.3L1155.2,391.2L1163.0,388.3M1125.0,397.1L1135.7,399.1L1143.5,401.0L1150.4,399.1L1155.2,392.2M1121.1,398.1L1137.7,400.0L1137.7,402.0L1139.6,407.9L1137.7,410.8L1140.6,418.6L1133.8,426.4L1131.8,431.3M1140.6,413.7L1157.2,413.7L1171.8,414.7L1178.7,411.8L1182.6,409.8L1194.3,410.8L1198.2,417.6L1206.0,420.5L1215.8,423.5L1227.5,425.4L1226.5,432.3L1219.7,436.2M1091.8,417.6L1108.4,423.5L1123.0,426.4L1131.8,428.4M1082.0,424.5L1094.7,428.4L1104.5,430.3L1110.3,425.4M1104.5,432.3L1116.2,430.3L1125.9,430.3L1132.8,431.3M1083.0,442.0L1098.6,440.1L1103.5,438.1L1100.5,432.3M1100.5,440.1L1108.4,444.0L1118.1,444.0L1125.9,443.0L1132.8,432.3L1147.4,432.3L1157.2,431.3L1165.0,434.2M1157.2,431.3L1170.9,438.1L1172.8,445.0L1167.0,445.0M1125.9,443.0L1133.8,451.8L1147.4,454.7L1161.1,453.8L1165.0,453.8M1098.6,447.9L1108.4,445.9L1117.1,445.9L1120.1,457.7L1116.2,462.5M1118.1,463.5L1124.0,462.5L1133.8,457.7L1135.7,451.8M1123.0,470.4L1135.7,465.5L1147.4,466.4L1155.2,465.5L1163.0,467.4M1049.8,406.9L1045.9,422.5M1482.4,428.2L1501.9,424.2L1544.9,412.5L1572.2,416.4L1638.6,424.2L1658.2,408.6M627.0,625.0L624.5,640.0L639.5,652.5L647.0,657.5L649.5,680.0L659.5,685.0M683.2,637.5L687.0,655.0L694.5,665.0M702.0,657.5L707.0,680.0M719.5,662.5L722.0,677.5M579.5,695.0L592.0,687.5L604.5,695.0L624.5,705.0L634.5,710.0M577.0,717.5L594.5,705.0L607.0,692.5M642.0,750.0L639.5,772.5L644.5,787.5M677.0,797.5L697.0,795.0L702.0,807.5M592.0,650.0L599.5,647.5M354.1,427.4L500.6,427.4L512.3,432.1L531.8,439.9L563.1,451.6L570.9,467.2L594.3,463.3L633.4,451.6L649.0,443.8L664.6,451.6M254.5,318.0L254.5,365.7L277.9,373.5L297.4,385.2L313.1,400.8M383.8,515.5L400.0,516.8L420.0,520.5L440.0,521.8L455.0,533.0L465.0,533.0L487.5,550.5M525.0,613.3L532.3,611.8L545.5,607.4M544.1,620.6L552.9,614.8L561.6,611.8M551.4,632.3L561.6,632.3"/>
<path fill="none" stroke="#f6dc97" stroke-width="1.3" d="M1428.6,500.6L1434.5,510.8L1440.3,522.5L1444.7,531.3M1488.7,547.4L1507.7,541.6L1522.3,535.7L1537.0,540.1M644.5,800.0L639.5,837.5L632.0,875.0L624.5,905.0L619.5,940.0"/>
</g></svg><div style="position:absolute;left:28px;top:958px;width:143px;height:37px;box-sizing:border-box;border:1px solid #d3d6da;border-radius:3px;background:#fff;"></div>
<div class="t" style="left:44.0px;top:968.0px;font-size:16px;color:#74777c;font-weight:400;letter-spacing:0.12px;">World</div>
<div style="position:absolute;left:157px;top:972px;width:0;height:0;border-left:3.5px solid transparent;border-right:3.5px solid transparent;border-top:7px solid #55585c;"></div>
<div style="position:absolute;left:177.5px;top:958px;width:45.5px;height:36px;box-sizing:border-box;border:1px solid #d8dbde;border-radius:3px;background:#f6f7f8;"></div>
<div style="position:absolute;left:229.5px;top:958px;width:39.0px;height:36px;box-sizing:border-box;border:1px solid #d8dbde;border-radius:3px;background:#f6f7f8;"></div>
<div style="position:absolute;left:275.5px;top:958px;width:43.0px;height:36px;box-sizing:border-box;border:1px solid #d8dbde;border-radius:3px;background:#f6f7f8;"></div>
<div class="t" style="left:196.0px;top:968.0px;font-size:16px;color:#6d7075;font-weight:400;letter-spacing:0.00px;">0</div>
<div class="t" style="left:246.0px;top:968.1px;font-size:14px;color:#8a8d91;font-weight:400;letter-spacing:0.00px;">-</div>
<div class="t" style="left:292.0px;top:969.1px;font-size:14px;color:#8a8d91;font-weight:400;letter-spacing:0.00px;">+</div>
<div class="t" style="left:331.0px;top:968.3px;font-size:15px;color:#74777c;font-weight:400;letter-spacing:0.31px;">0%</div>
<div style="position:absolute;left:523px;top:962.5px;width:19.5px;height:19.5px;box-sizing:border-box;background:#dd3b3b;border:1.5px solid #9b3030;"></div>
<div class="t" style="left:547.0px;top:964.8px;font-size:16px;color:#5d6066;font-weight:400;letter-spacing:0.38px;">Apdex below 0.70</div>
<div style="position:absolute;left:714.5px;top:962.5px;width:19.5px;height:19.5px;box-sizing:border-box;background:#f7c33e;border:1.5px solid #8a7040;"></div>
<div class="t" style="left:739.5px;top:964.8px;font-size:16px;color:#5d6066;font-weight:400;letter-spacing:0.43px;">Apdex between 0.70 and 0.90</div>
<div style="position:absolute;left:997.5px;top:962.5px;width:19.5px;height:19.5px;box-sizing:border-box;background:#6cae3c;border:1.5px solid #3d6b2f;"></div>
<div class="t" style="left:1023.0px;top:964.8px;font-size:16px;color:#5d6066;font-weight:400;letter-spacing:0.53px;">Apdex above 0.90</div>
<div style="position:absolute;left:22px;top:1008px;width:2003px;height:221px;background:#fff;"></div>
<div class="t" style="left:37.0px;top:1022.7px;font-size:17.5px;color:#6b6e73;font-weight:400;letter-spacing:0.49px;">World View Table (15m Resolution)</div>
<div style="position:absolute;left:22px;top:1048px;width:2003px;height:37px;background:#e4e7eb;"></div>
<div style="position:absolute;left:494px;top:1048px;width:2.5px;height:37px;background:#f0f2f4;"></div>
<div style="position:absolute;left:994px;top:1048px;width:2.5px;height:37px;background:#f0f2f4;"></div>
<div style="position:absolute;left:1394px;top:1048px;width:2.5px;height:37px;background:#f0f2f4;"></div>
<div style="position:absolute;left:1789px;top:1048px;width:2.5px;height:37px;background:#f0f2f4;"></div>
<div class="t" style="left:36.5px;top:1058.0px;font-size:16px;color:#6a6d73;font-weight:400;letter-spacing:-0.18px;">Country</div>
<div style="position:absolute;left:100px;top:1061px;width:0;height:0;border-left:3px solid transparent;border-right:3px solid transparent;border-bottom:4px solid #8d9095;"></div><div style="position:absolute;left:100px;top:1067px;width:0;height:0;border-left:3px solid transparent;border-right:3px solid transparent;border-top:4px solid #8d9095;"></div>
<div class="t" style="left:815.0px;top:1058.0px;font-size:16px;color:#6a6d73;font-weight:400;letter-spacing:0.15px;">Avg. Response Time</div>
<div style="position:absolute;left:971px;top:1061px;width:0;height:0;border-left:3px solid transparent;border-right:3px solid transparent;border-bottom:4px solid #8d9095;"></div><div style="position:absolute;left:971px;top:1067px;width:0;height:0;border-left:3px solid transparent;border-right:3px solid transparent;border-top:4px solid #8d9095;"></div>
<div class="t" style="left:1253.0px;top:1058.0px;font-size:16px;color:#6a6d73;font-weight:400;letter-spacing:0.23px;">95th Percentile</div>
<div style="position:absolute;left:1369px;top:1061px;width:0;height:0;border-left:3px solid transparent;border-right:3px solid transparent;border-bottom:4px solid #8d9095;"></div><div style="position:absolute;left:1369px;top:1067px;width:0;height:0;border-left:3px solid transparent;border-right:3px solid transparent;border-top:4px solid #8d9095;"></div>
<div class="t" style="left:1649.0px;top:1058.0px;font-size:16px;color:#6a6d73;font-weight:400;letter-spacing:0.04px;">Page Requests</div>
<div style="position:absolute;left:1765px;top:1061px;width:0;height:0;border-left:3px solid transparent;border-right:3px solid transparent;border-bottom:4px solid #8d9095;"></div><div style="position:absolute;left:1765px;top:1067px;width:0;height:0;border-left:3px solid transparent;border-right:3px solid transparent;border-top:4px solid #8d9095;"></div>
<div class="t" style="left:1948.0px;top:1058.0px;font-size:16px;color:#6a6d73;font-weight:400;letter-spacing:0.65px;">Apdex</div>
<div style="position:absolute;left:2002px;top:1061px;width:0;height:0;border-left:3px solid transparent;border-right:3px solid transparent;border-bottom:4px solid #8d9095;"></div><div style="position:absolute;left:2002px;top:1067px;width:0;height:0;border-left:3px solid transparent;border-right:3px solid transparent;border-top:4px solid #8d9095;"></div>
<div class="t" style="left:36.5px;top:1096.6px;font-size:16px;color:#5f6268;font-weight:400;letter-spacing:0.56px;">United Arab Emirates</div>
<div class="t" style="left:925.3px;top:1096.6px;font-size:16px;color:#5f6268;font-weight:400;letter-spacing:0.26px;">2.7 sec</div>
<div class="t" style="left:1325.3px;top:1096.6px;font-size:16px;color:#5f6268;font-weight:400;letter-spacing:0.26px;">5.3 sec</div>
<div class="t" style="left:1756.2px;top:1096.6px;font-size:16px;color:#5f6268;font-weight:400;letter-spacing:0.53px;">28</div>
<div class="t" style="left:1977.9px;top:1096.6px;font-size:16px;color:#5f6268;font-weight:400;letter-spacing:0.31px;">0.88</div>
<div style="position:absolute;left:22px;top:1124.1px;width:2003px;height:38.600000000000136px;background:#f4f5f7;"></div>
<div class="t" style="left:36.5px;top:1135.2px;font-size:16px;color:#5f6268;font-weight:400;letter-spacing:0.60px;">Argentina</div>
<div class="t" style="left:925.3px;top:1135.2px;font-size:16px;color:#5f6268;font-weight:400;letter-spacing:0.26px;">3.1 sec</div>
<div class="t" style="left:1325.3px;top:1135.2px;font-size:16px;color:#5f6268;font-weight:400;letter-spacing:0.26px;">5.6 sec</div>
<div class="t" style="left:1756.2px;top:1135.2px;font-size:16px;color:#5f6268;font-weight:400;letter-spacing:0.53px;">28</div>
<div class="t" style="left:1977.9px;top:1135.2px;font-size:16px;color:#5f6268;font-weight:400;letter-spacing:0.31px;">0.88</div>
<div class="t" style="left:36.5px;top:1173.8px;font-size:16px;color:#5f6268;font-weight:400;letter-spacing:0.55px;">Australia</div>
<div class="t" style="left:925.3px;top:1173.8px;font-size:16px;color:#5f6268;font-weight:400;letter-spacing:0.26px;">3.7 sec</div>
<div class="t" style="left:1325.3px;top:1173.8px;font-size:16px;color:#5f6268;font-weight:400;letter-spacing:0.26px;">6.1 sec</div>
<div class="t" style="left:1756.2px;top:1173.8px;font-size:16px;color:#5f6268;font-weight:400;letter-spacing:0.53px;">83</div>
<div class="t" style="left:1977.9px;top:1173.8px;font-size:16px;color:#5f6268;font-weight:400;letter-spacing:0.31px;">0.83</div>
<div style="position:absolute;left:22px;top:1201.3px;width:2003px;height:38.600000000000136px;background:#f4f5f7;"></div>
<div class="t" style="left:36.5px;top:1212.4px;font-size:16px;color:#5f6268;font-weight:400;letter-spacing:0.56px;">Brazil</div>
<div class="t" style="left:925.3px;top:1212.4px;font-size:16px;color:#5f6268;font-weight:400;letter-spacing:0.26px;">2.8 sec</div>
<div class="t" style="left:1325.3px;top:1212.4px;font-size:16px;color:#5f6268;font-weight:400;letter-spacing:0.26px;">5.2 sec</div>
<div class="t" style="left:1756.2px;top:1212.4px;font-size:16px;color:#5f6268;font-weight:400;letter-spacing:0.53px;">28</div>
<div class="t" style="left:1977.9px;top:1212.4px;font-size:16px;color:#5f6268;font-weight:400;letter-spacing:0.31px;">0.88</div>
<div style="position:absolute;left:2025px;top:53px;width:23px;height:1176px;background:#f2f3f5;"></div>
</body></html>
